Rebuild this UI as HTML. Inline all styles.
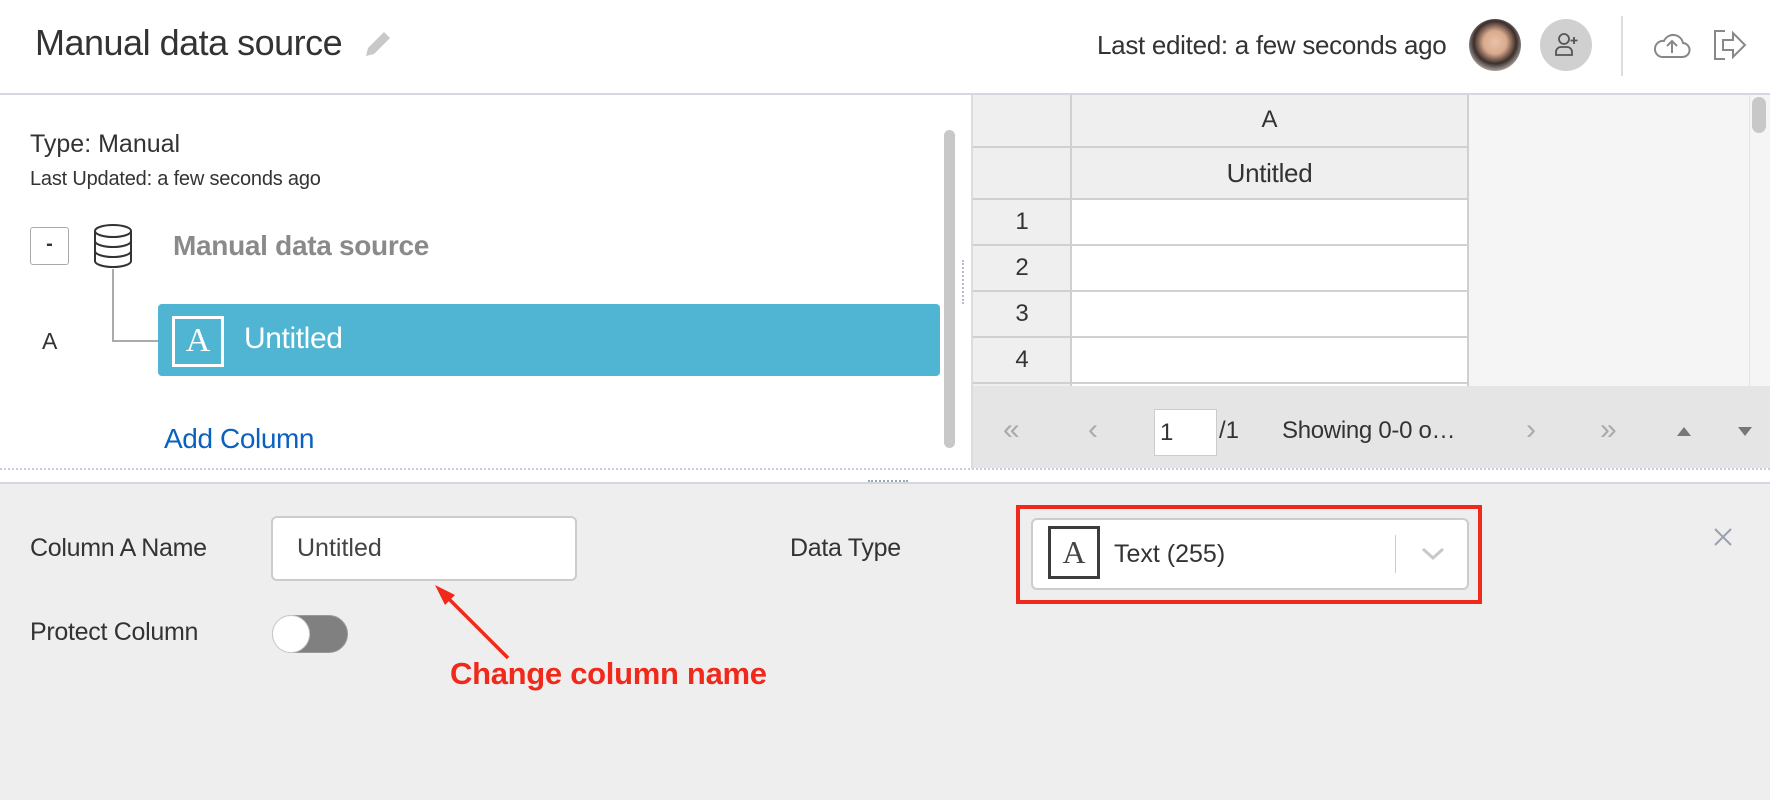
<!DOCTYPE html>
<html><head><meta charset="utf-8"><style>
*{box-sizing:border-box;margin:0;padding:0}
body{width:1770px;height:800px;position:relative;overflow:hidden;background:#fff;font-family:"Liberation Sans",sans-serif;color:#333}
.a{position:absolute;white-space:nowrap}
.gl{position:absolute;background:#d0d0d0}
</style></head><body>
<!-- header -->
<div class="a" style="left:35px;top:22px;font-size:36px;color:#333;letter-spacing:-0.5px">Manual data source</div>
<svg class="a" style="left:362px;top:28px" width="34" height="32" viewBox="0 0 34 32"><path d="M4 28 L6 20 L22 4 L28 10 L12 26 Z" fill="#c8c8c8"/></svg>
<div class="a" style="left:1097px;top:30px;font-size:26px;color:#333;letter-spacing:-0.3px">Last edited: a few seconds ago</div>
<div class="a" style="left:1469px;top:19px;width:52px;height:52px;border-radius:50%;background:radial-gradient(circle at 50% 45%,#e8c3aa 0,#d9a98d 30%,#3a2e2b 55%,#b0a8a4 75%);"></div>
<div class="a" style="left:1540px;top:19px;width:52px;height:52px;border-radius:50%;background:#d0d0d0"></div>
<svg class="a" style="left:1553px;top:31px" width="28" height="28" viewBox="0 0 28 28" fill="none" stroke="#555" stroke-width="1.8"><circle cx="11" cy="8" r="5"/><path d="M3 24 v-3 a5 5 0 0 1 5-5 h6 a5 5 0 0 1 5 5 v3 Z"/><path d="M21 6 v7 M17.5 9.5 h7"/></svg>
<div class="a" style="left:1621px;top:16px;width:2px;height:60px;background:#ddd"></div>
<svg class="a" style="left:1652px;top:30px" width="40" height="32" viewBox="0 0 40 32" fill="none" stroke="#888" stroke-width="2"><path d="M10 27 h20 a7 7 0 0 0 1-14 a10 10 0 0 0-19-2 a8 8 0 0 0-2 16 Z"/><path d="M20 23 v-11 M15 16 l5-5 l5 5"/></svg>
<svg class="a" style="left:1711px;top:27px" width="38" height="36" viewBox="0 0 38 36" fill="none" stroke="#888" stroke-width="2"><path d="M14 4 H4 V32 H14"/><path d="M12 13 H22 V6 L34 18 L22 30 V23 H12 Z"/></svg>
<div class="a" style="left:0;top:93px;width:1770px;height:2px;background:#d4d6e6"></div>

<!-- left panel -->
<div class="a" style="left:30px;top:130px;font-size:25px;color:#333">Type: Manual</div>
<div class="a" style="left:30px;top:168px;font-size:20px;color:#333;letter-spacing:-0.2px">Last Updated: a few seconds ago</div>
<div class="a" style="left:30px;top:227px;width:39px;height:38px;border:1.5px solid #aaa;border-radius:3px;font-size:20px;text-align:center;line-height:32px;font-weight:bold">-</div>
<svg class="a" style="left:93px;top:223px" width="40" height="46" viewBox="0 0 40 46" fill="none" stroke="#333" stroke-width="2"><ellipse cx="20" cy="8" rx="18" ry="6"/><path d="M2 8 V38 a18 6 0 0 0 36 0 V8"/><path d="M2 18 a18 6 0 0 0 36 0 M2 28 a18 6 0 0 0 36 0"/></svg>
<div class="a" style="left:173px;top:230px;font-size:28px;font-weight:bold;color:#8a8a8a;letter-spacing:-0.3px">Manual data source</div>
<div class="a" style="left:112px;top:269px;width:1.5px;height:72px;background:#aaa"></div>
<div class="a" style="left:112px;top:340px;width:47px;height:1.5px;background:#aaa"></div>
<div class="a" style="left:42px;top:328px;font-size:23px">A</div>
<div class="a" style="left:158px;top:304px;width:782px;height:72px;background:#4fb5d3;border-radius:4px"></div>
<div class="a" style="left:172px;top:316px;width:52px;height:51px;border:3px solid #fff;color:#fff;font-family:'Liberation Serif',serif;font-size:34px;text-align:center;line-height:44px">A</div>
<div class="a" style="left:244px;top:322px;font-size:30px;color:#fff;letter-spacing:-0.4px">Untitled</div>
<div class="a" style="left:164px;top:423px;font-size:28px;color:#0a62c0;letter-spacing:-0.4px">Add Column</div>
<div class="a" style="left:944px;top:130px;width:11px;height:318px;background:#c8c8c8;border-radius:6px"></div>
<div class="a" style="left:0;top:468px;width:1770px;border-top:2px dotted #c8cce0"></div>
<div class="a" style="left:868px;top:480px;width:40px;border-top:2px dotted #9aa"></div>
<div class="a" style="left:962px;top:260px;height:44px;border-left:2px dotted #b8bcd0"></div>

<!-- grid -->
<div class="a" style="left:971px;top:95px;width:2px;height:374px;background:#ddd"></div>
<div class="a" style="left:973px;top:95px;width:797px;height:292px;background:#f5f5f5"></div>
<div class="a" style="left:973px;top:95px;width:495px;height:104px;background:#efefef"></div>
<div class="a" style="left:973px;top:199px;width:98px;height:188px;background:#efefef"></div>
<div class="a" style="left:1071px;top:199px;width:397px;height:188px;background:#fff"></div>
<div class="gl" style="left:1070px;top:95px;width:2px;height:292px"></div>
<div class="gl" style="left:1467px;top:95px;width:2px;height:292px"></div>
<div class="gl" style="left:973px;top:146px;width:495px;height:2px"></div>
<div class="gl" style="left:973px;top:198px;width:495px;height:2px"></div>
<div class="gl" style="left:973px;top:244px;width:495px;height:2px"></div>
<div class="gl" style="left:973px;top:290px;width:495px;height:2px"></div>
<div class="gl" style="left:973px;top:336px;width:495px;height:2px"></div>
<div class="gl" style="left:973px;top:382px;width:495px;height:2px"></div>
<div class="a" style="left:1071px;top:106px;width:397px;text-align:center;font-size:24px">A</div>
<div class="a" style="left:1071px;top:158px;width:397px;text-align:center;font-size:26px;letter-spacing:-0.3px">Untitled</div>
<div class="a" style="left:973px;top:208px;width:98px;text-align:center;font-size:24px">1</div>
<div class="a" style="left:973px;top:254px;width:98px;text-align:center;font-size:24px">2</div>
<div class="a" style="left:973px;top:300px;width:98px;text-align:center;font-size:24px">3</div>
<div class="a" style="left:973px;top:346px;width:98px;text-align:center;font-size:24px">4</div>
<div class="a" style="left:1749px;top:95px;width:1px;height:292px;background:#e4e4e4"></div>
<div class="a" style="left:1752px;top:97px;width:14px;height:36px;background:#c8c8c8;border-radius:7px"></div>
<!-- pager -->
<div class="a" style="left:973px;top:386px;width:797px;height:82px;background:#e5e5e5"></div>
<div class="a" style="left:1003px;top:413px;font-size:30px;color:#aaa">«</div>
<div class="a" style="left:1088px;top:413px;font-size:30px;color:#aaa">‹</div>
<div class="a" style="left:1154px;top:409px;width:63px;height:47px;background:#fff;border:1px solid #ccc;font-size:24px;padding:9px 0 0 5px">1</div>
<div class="a" style="left:1219px;top:417px;font-size:24px">/1</div>
<div class="a" style="left:1282px;top:417px;font-size:24px;letter-spacing:-0.3px">Showing 0-0 o…</div>
<div class="a" style="left:1526px;top:413px;font-size:30px;color:#aaa">›</div>
<div class="a" style="left:1600px;top:413px;font-size:30px;color:#aaa">»</div>
<svg class="a" style="left:1676px;top:425px" width="16" height="12"><path d="M1 11 L8 2 L15 11Z" fill="#777"/></svg>
<svg class="a" style="left:1737px;top:426px" width="16" height="12"><path d="M1 1 L8 10 L15 1Z" fill="#777"/></svg>

<!-- bottom panel -->
<div class="a" style="left:0;top:482px;width:1770px;height:318px;background:#eeeeee;border-top:2px solid #d4d6e6"></div>
<div class="a" style="left:30px;top:534px;font-size:25px;color:#333;letter-spacing:-0.3px">Column A Name</div>
<div class="a" style="left:271px;top:516px;width:306px;height:65px;background:#fff;border:2px solid #ccc;border-radius:6px;font-size:25px;color:#444;padding:16px 0 0 24px">Untitled</div>
<div class="a" style="left:30px;top:618px;font-size:25px;color:#333;letter-spacing:-0.3px">Protect Column</div>
<div class="a" style="left:272px;top:615px;width:76px;height:38px;background:#808080;border-radius:19px;border:1px solid #999"></div>
<div class="a" style="left:272px;top:615px;width:38px;height:38px;background:#fff;border-radius:50%;border:1px solid #ccc"></div>
<div class="a" style="left:790px;top:534px;font-size:25px;color:#333;letter-spacing:-0.3px">Data Type</div>
<div class="a" style="left:1016px;top:505px;width:466px;height:99px;border:4px solid #f0291a"></div>
<div class="a" style="left:1031px;top:518px;width:438px;height:72px;background:#fff;border:2px solid #ccc;border-radius:6px"></div>
<div class="a" style="left:1048px;top:526px;width:52px;height:53px;border:3px solid #3c3c3c;font-family:'Liberation Serif',serif;font-size:32px;text-align:center;line-height:46px;color:#444">A</div>
<div class="a" style="left:1114px;top:540px;font-size:25px;color:#333">Text (255)</div>
<div class="a" style="left:1395px;top:535px;width:1px;height:38px;background:#ccc"></div>
<svg class="a" style="left:1420px;top:546px" width="26" height="16"><path d="M3 3 L13 12 L23 3" fill="none" stroke="#c8c8c8" stroke-width="3"/></svg>
<svg class="a" style="left:1713px;top:527px" width="20" height="20"><path d="M2 2 L18 18 M18 2 L2 18" stroke="#9aa0ad" stroke-width="2"/></svg>
<svg class="a" style="left:425px;top:575px" width="100" height="90"><path d="M83 83 L16 16" stroke="#f0291a" stroke-width="3.5"/><path d="M10 10 L30 20 L20 30 Z" fill="#f0291a"/></svg>
<div class="a" style="left:450px;top:656px;font-size:31px;font-weight:bold;color:#f0291a;letter-spacing:-0.3px">Change column name</div>
</body></html>
